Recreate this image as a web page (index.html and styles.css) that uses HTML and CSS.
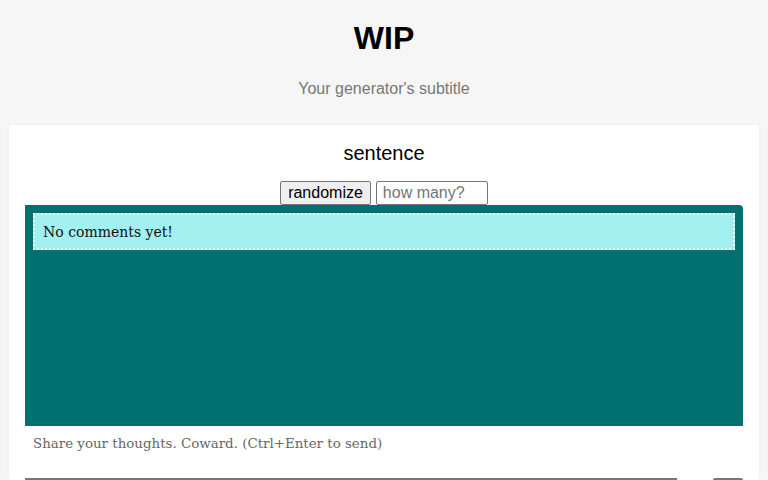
FILE: index.html
```html
<!DOCTYPE html>
<html>
<head>
<meta charset="utf-8">
<link rel="stylesheet" href="styles.css">
</head>
<body>
<header class="head">
  <h1 class="title">WIP</h1>
  <p class="subtitle">Your generator's subtitle</p>
</header>
<main class="card">
  <h2 class="gen-title">sentence</h2>
  <div class="controls">
    <button class="btn">randomize</button>
    <input class="count" type="text" placeholder="how many?">
  </div>
  <section class="comments">
    <div class="comment-list">
      <div class="empty">No comments yet!</div>
    </div>
  </section>
  <textarea class="reply" placeholder="Share your thoughts. Coward. (Ctrl+Enter to send)"></textarea>
  <div class="send-row">
    <input class="name" type="text">
    <button class="send"></button>
  </div>
</main>
</body>
</html>
```

FILE: styles.css
```css
html, body {
  margin: 0;
  padding: 0;
  background: #f6f6f6;
  font-family: "Liberation Sans", Arial, sans-serif;
  overflow: hidden;
  height: 480px;
}
.head {
  text-align: center;
  padding-top: 20px;
}
.title {
  margin: 0;
  font-size: 32px;
  font-weight: bold;
  color: #000;
  line-height: 37px;
}
.subtitle {
  margin: 23px 0 0 0;
  font-size: 16px;
  color: #777;
  line-height: 18px;
}
.card {
  margin: 27px 9px 0 9px;
  background: #fff;
  border-radius: 3px;
  box-shadow: 0 0 3px rgba(0,0,0,0.06);
  padding: 16px 16px 0 16px;
  height: 339px;
}
.gen-title {
  margin: 0;
  text-align: center;
  font-size: 20px;
  font-weight: normal;
  color: #000;
  line-height: 24px;
}
.controls {
  display: flex;
  justify-content: center;
  gap: 5px;
  margin-top: 16px;
  height: 24px;
}
.btn {
  font-family: "Liberation Sans", Arial, sans-serif;
  font-size: 16px;
  padding: 0 7px;
  height: 24px;
  background: #efefef;
  border: 1px solid #767676;
  border-radius: 2px;
  color: #000;
}
.count {
  font-family: "Liberation Sans", Arial, sans-serif;
  font-size: 16px;
  width: 112px;
  height: 24px;
  box-sizing: border-box;
  padding: 1px 6px;
  border: 1px solid #767676;
  border-radius: 2px;
}
.count::placeholder { color: #757575; }
.comments {
  background: #007070;
  border-top-right-radius: 4px;
  height: 221px;
  padding: 8px;
  box-sizing: border-box;
}
.comment-list {
  background: #a2f0f0;
  border: 2px dotted #f2ffff;
  height: 37px;
  box-sizing: border-box;
  display: flex;
  align-items: center;
  padding-left: 8px;
}
.empty {
  font-family: "DejaVu Serif", serif;
  font-size: 14px;
  color: #111;
}
.reply {
  display: block;
  width: 100%;
  box-sizing: border-box;
  border: none;
  outline: none;
  resize: none;
  height: 46px;
  padding: 9px 8px 7px 8px;
  font-family: "DejaVu Serif", serif;
  font-size: 13.4px;
  line-height: 18px;
  background: #fff;
}
.reply::placeholder { color: #666; }
.send-row {
  display: flex;
  justify-content: space-between;
  margin-top: 6px;
  height: 2px;
  overflow: hidden;
}
.name {
  width: 652px;
  height: 30px;
  border: none;
  border-top: 2px solid #777;
  padding: 0;
  background: #fff;
}
.send {
  width: 30px;
  height: 30px;
  border: none;
  border-top: 2px solid #777;
  border-radius: 2px 2px 0 0;
  background: #fff;
  padding: 0;
}
```
